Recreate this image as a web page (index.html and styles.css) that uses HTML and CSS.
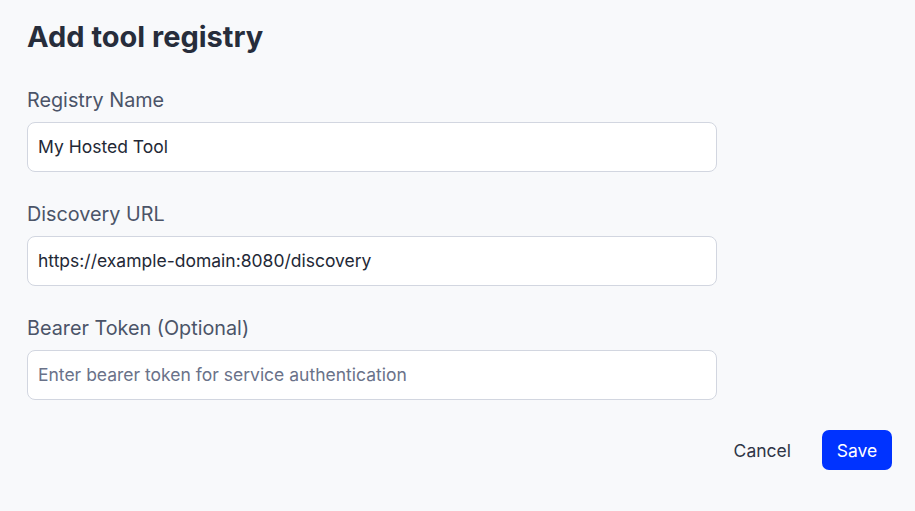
FILE: index.html
```html
<!DOCTYPE html>
<html lang="en">
<head>
<meta charset="utf-8">
<title>Add tool registry</title>
<link rel="stylesheet" href="styles.css">
</head>
<body>
<main class="page">
  <h1 class="title">Add tool registry</h1>
  <form class="form">
    <div class="field">
      <label class="label" for="name">Registry Name</label>
      <input class="input" id="name" type="text" value="My Hosted Tool">
    </div>
    <div class="field">
      <label class="label" for="url">Discovery URL</label>
      <input class="input" id="url" type="text" value="https://example-domain:8080/discovery">
    </div>
    <div class="field">
      <label class="label" for="token">Bearer Token (Optional)</label>
      <input class="input" id="token" type="text" placeholder="Enter bearer token for service authentication">
    </div>
  </form>
  <div class="actions">
    <button class="btn btn-ghost" type="button">Cancel</button>
    <button class="btn btn-primary" type="button">Save</button>
  </div>
</main>
</body>
</html>
```

FILE: styles.css
```css
* { box-sizing: border-box; }
html, body { margin: 0; height: 100%; }
body {
  background: #f8f9fb;
  font-family: Inter, "Noto Sans", "Liberation Sans", sans-serif;
  color: #2a3142;
}
.page {
  padding: 19px 23px 0 27px;
}
.title {
  margin: 0;
  font-size: 29px;
  line-height: 36px;
  font-weight: 700;
  color: #272d3b;
}
.form {
  display: flex;
  flex-direction: column;
  gap: 30px;
  margin-top: 33px;
  width: 690px;
}
.field {
  display: flex;
  flex-direction: column;
  gap: 10px;
}
.label {
  font-size: 19.8px;
  line-height: 24px;
  color: #4b5468;
}
.input {
  height: 50px;
  width: 100%;
  border: 1px solid #d2d6e0;
  border-radius: 8px;
  background: #ffffff;
  padding: 0 10px 1px;
  font-family: inherit;
  font-size: 17.5px;
  color: #232836;
  outline: none;
}
.input::placeholder { color: #6a7289; }
.actions {
  display: flex;
  justify-content: flex-end;
  gap: 15px;
  margin-top: 30px;
}
.btn {
  height: 40px;
  border: none;
  border-radius: 7px;
  padding: 0 16px;
  font-family: inherit;
  font-size: 17.5px;
  cursor: pointer;
}
.btn-ghost {
  background: transparent;
  color: #2f3546;
}
.btn-primary {
  background: #0033ff;
  color: #ffffff;
  width: 70px;
  padding: 0;
}
```
